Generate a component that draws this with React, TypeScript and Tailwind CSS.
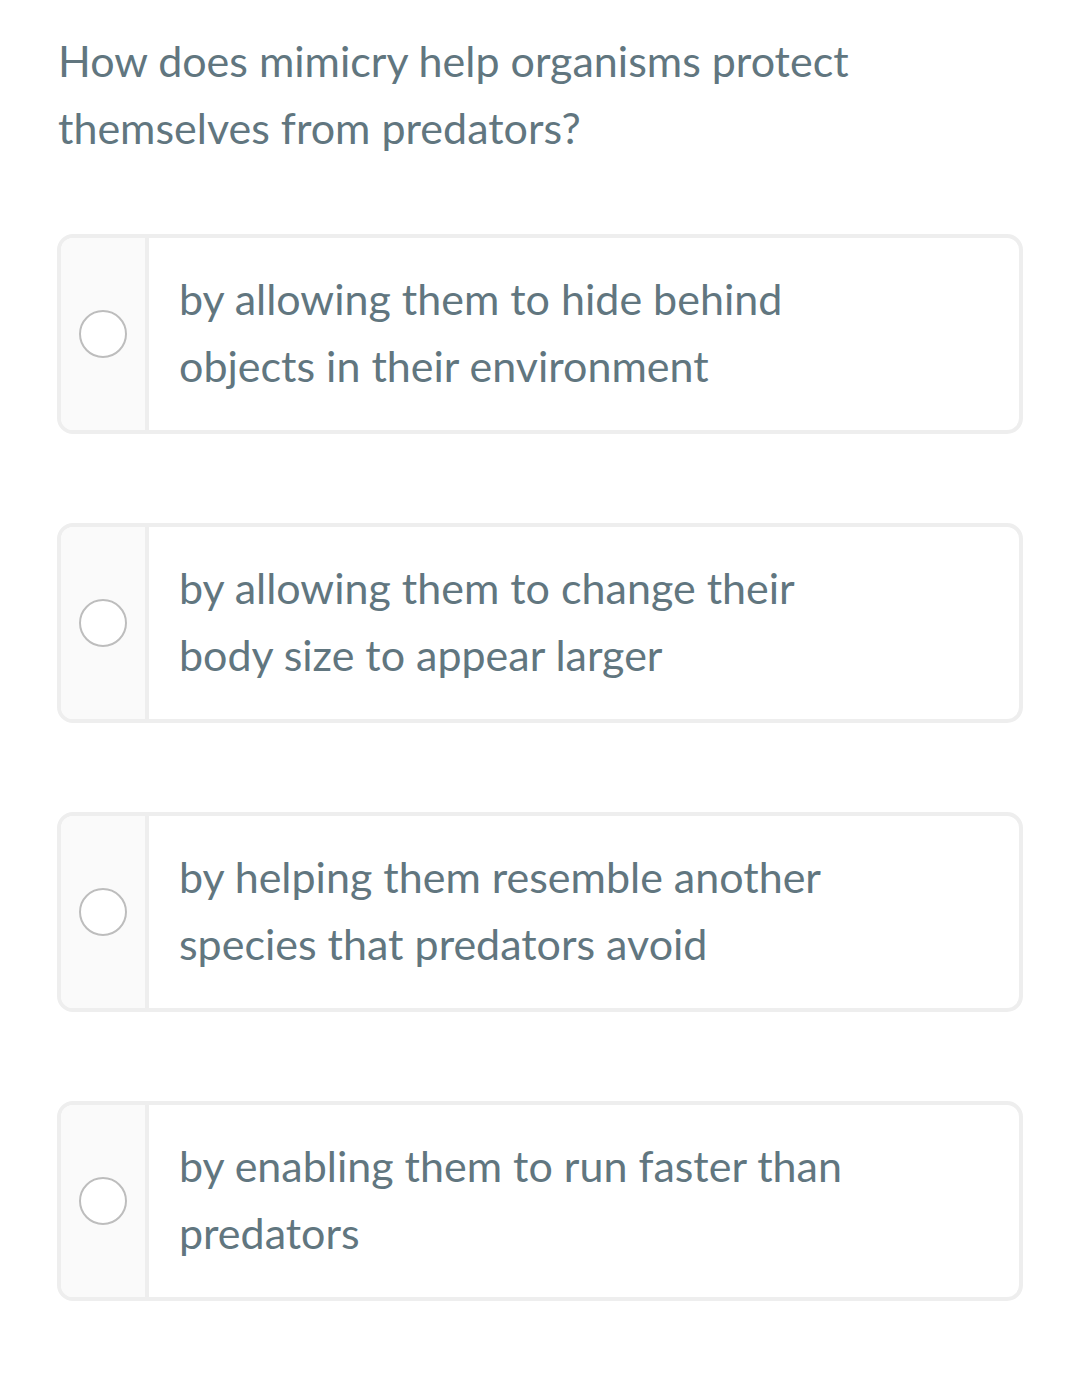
const OPTIONS = [
  ["by allowing them to hide behind", "objects in their environment"],
  ["by allowing them to change their", "body size to appear larger"],
  ["by helping them resemble another", "species that predators avoid"],
  ["by enabling them to run faster than", "predators"],
];

export default function App() {
  return (
    <div
      className="min-h-[1389px] bg-white px-[57px] pt-[27px] text-[#61767f]"
      style={{ fontFamily: "Lato, 'Noto Sans', sans-serif" }}
    >
      <h1 className="text-[43px] leading-[67px] font-normal pl-[1px]">
        How does mimicry help organisms protect
        <br />
        themselves from predators?
      </h1>

      <div className="mt-[73px] flex flex-col gap-[89px]">
        {OPTIONS.map((lines, i) => (
          <button
            key={i}
            className="flex h-[200px] w-full overflow-hidden rounded-[16px] border-4 border-[#eeeeee] bg-white text-left"
          >
            {/* Radio column */}
            <div className="flex w-[88px] shrink-0 items-center justify-center border-r-4 border-[#eeeeee] bg-[#fafafa]">
              <span className="h-[48px] w-[48px] rounded-full border-2 border-[#bdbdbd] bg-white" />
            </div>
            <div className="flex flex-1 items-center pb-[4px] pl-[30px] text-[43px] leading-[67px]">
              <p>
                {lines[0]}
                <br />
                {lines[1]}
              </p>
            </div>
          </button>
        ))}
      </div>
    </div>
  );
}
